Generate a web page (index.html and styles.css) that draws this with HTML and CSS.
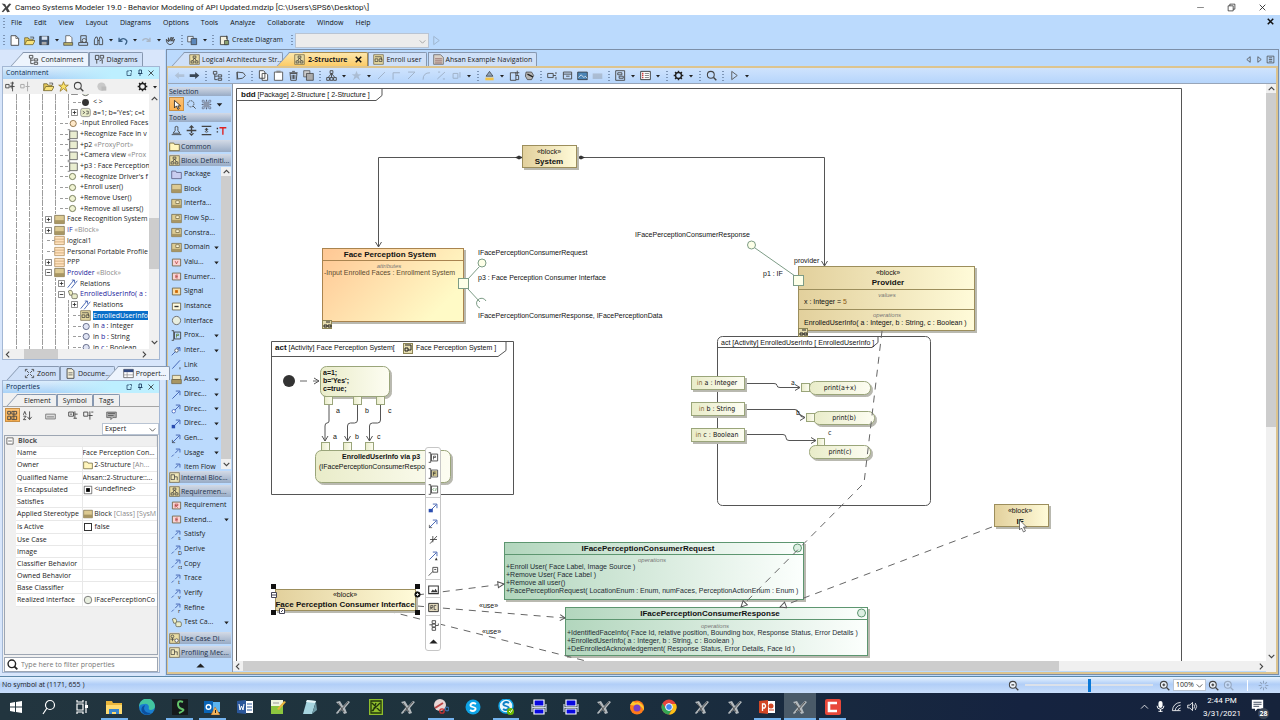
FILE: index.html
```html
<!DOCTYPE html>
<html lang="en">
<head>
    <meta charset="utf-8">
    <title>Cameo Systems Modeler 19.0</title>
    <link rel="stylesheet" href="styles.css">
</head>
<body>

<header class="titlebar">
    <i data-icon="cameoDark"></i>
    <span class="title">Cameo Systems Modeler 19.0 - Behavior Modeling of API Updated.mdzip [C:\Users\SPS6\Desktop\]</span>
    <button class="win" aria-label="Minimize"><i data-icon="min"></i></button>
    <button class="win" aria-label="Restore"><i data-icon="restore"></i></button>
    <button class="win" aria-label="Close"><i data-icon="close"></i></button>
</header>

<nav class="menubar">
    <span class="grip"></span>
    <button>File</button>
    <button>Edit</button>
    <button>View</button>
    <button>Layout</button>
    <button>Diagrams</button>
    <button>Options</button>
    <button>Tools</button>
    <button>Analyze</button>
    <button>Collaborate</button>
    <button>Window</button>
    <button>Help</button>
    <button class="closedoc" aria-label="Close document"><i data-icon="closeBold"></i></button>
</nav>

<div class="toolbar main-tools">
    <span class="tools" data-tools="| newDoc open save v print preview find v undo v redo v clean | copyDiag v |"></span>
    <button class="create"><i data-icon="create"></i>Create Diagram</button>
    <span class="grip"></span>
    <span class="drop quick"><select aria-label="Quick run" disabled><option></option></select><i data-icon="chev"></i></span>
    <button class="tool off" aria-label="Run"><i data-icon="play"></i></button>
</div>

<main>
    <aside>
        <div class="tabs">
            <button class="tab slant on"><i data-icon="tree"></i>Containment</button>
            <button class="tab"><i data-icon="diagrams"></i>Diagrams</button>
        </div>
        <section class="panel containment">
            <h2>Containment<span class="panel-btns"><i data-icon="float"></i><i data-icon="pin"></i><i data-icon="close"></i></span></h2>
            <div class="toolbar grey">
                <span class="tools" data-tools="expand collapse _ open star search _ refresh"></span>
                <span class="tools push" data-tools="gear v"></span>
            </div>
            <div class="tree-wrap">
                <ul class="tree" id="tree"></ul>
                <div class="vscroll tree-scroll"><i data-icon="up"></i><span class="thumb"></span><i data-icon="down"></i></div>
            </div>
            <div class="hscroll tree-h"><i data-icon="left"></i><span class="thumb"></span><i data-icon="right"></i></div>
        </section>

        <div class="tabs bottom-tabs">
            <button class="tab slant"><i data-icon="zoomTab"></i>Zoom</button>
            <button class="tab"><i data-icon="doc"></i>Docume...</button>
            <button class="tab slant on"><i data-icon="props"></i>Propert...</button>
        </div>
        <section class="panel properties">
            <h2>Properties<span class="panel-btns"><i data-icon="float"></i><i data-icon="pin"></i><i data-icon="close"></i></span></h2>
            <div class="tabs sub-tabs">
                <button class="tab slant on">Element</button>
                <button class="tab">Symbol</button>
                <button class="tab">Tags</button>
            </div>
            <div class="toolbar grey prop-tools">
                <span class="tools" data-tools="*categ sort _ desc _ expand2 collapse2 _ note"></span>
            </div>
            <div class="mode">
                <span class="drop"><select aria-label="Mode"><option>Expert</option></select><i data-icon="chev"></i></span>
            </div>
            <div class="grid">
                <table>
                    <colgroup><col class="gutter"><col class="names"><col></colgroup>
                    <tbody>
                        <tr class="group"><td><i data-icon="minusBox"></i></td><th colspan="2">Block</th></tr>
                        <tr><td></td><th>Name</th><td>Face Perception Con...</td></tr>
                        <tr class="tall"><td></td><th>Owner</th><td><i data-icon="folder"></i> 2-Structure <em>[Ah...</em></td></tr>
                        <tr><td></td><th>Qualified Name</th><td>Ahsan::2-Structure::...</td></tr>
                        <tr><td></td><th>Is Encapsulated</th><td><i data-icon="undef"></i> &lt;undefined&gt;</td></tr>
                        <tr><td></td><th>Satisfies</th><td></td></tr>
                        <tr class="tall"><td></td><th>Applied Stereotype</th><td><i data-icon="block"></i> Block <em>[Class] [SysM</em></td></tr>
                        <tr class="tall"><td></td><th>Is Active</th><td><label><input type="checkbox">false</label></td></tr>
                        <tr><td></td><th>Use Case</th><td></td></tr>
                        <tr><td></td><th>Image</th><td></td></tr>
                        <tr><td></td><th>Classifier Behavior</th><td></td></tr>
                        <tr><td></td><th>Owned Behavior</th><td></td></tr>
                        <tr><td></td><th>Base Classifier</th><td></td></tr>
                        <tr class="tall"><td></td><th>Realized Interface</th><td><i data-icon="iface"></i> IFacePerceptionCo</td></tr>
                    </tbody>
                </table>
            </div>
            <label class="filter"><i data-icon="searchBig"></i><input type="text" placeholder="Type here to filter properties"></label>
        </section>
    </aside>

    <section class="editor">
        <div class="tabs editor-tabs">
            <button class="tab slant first"><i data-icon="bdd"></i>Logical Architecture Str...</button>
            <button class="tab slant on"><i data-icon="bdd"></i>2-Structure<i data-icon="closeBold"></i></button>
            <button class="tab"><i data-icon="act"></i>Enroll user</button>
            <button class="tab"><i data-icon="nav"></i>Ahsan Example Navigation</button>
            <span class="tab-nav"><i data-icon="triL"></i><i data-icon="triR"></i><i data-icon="list"></i></span>
        </div>
        <div class="frame">
            <div class="toolbar">
                <span class="tools" data-tools="-back fwd | tree | goto | copy paste trash dup | layout v -route v -l1 -l2 -l3 -l4 -l5 -l6 v | fill v addDiag refreshD | port comp image -dim | align v listC v | gear v | search | play v"></span>
            </div>
            <div class="work">
                <div class="palette">
                    <h3>Selection</h3>
                    <div class="picks"><button class="tool hot" aria-label="Select"><i data-icon="cursor"></i></button><button class="tool" aria-label="Find in diagram"><i data-icon="lasso"></i></button><button class="tool" aria-label="Marquee"><i data-icon="marquee"></i></button><i data-icon="caret"></i></div>
                    <h3>Tools</h3>
                    <div class="picks"><button class="tool" aria-label="Stamp"><i data-icon="stamp"></i></button><button class="tool" aria-label="Spread"><i data-icon="spread"></i></button><button class="tool" aria-label="Gather"><i data-icon="gather"></i></button><button class="tool" aria-label="Text"><i data-icon="textT"></i></button></div>
                    <h3 class="drawer"><i data-icon="folder"></i>Common</h3>
                    <h3 class="drawer"><i data-icon="bdd"></i>Block Definiti...</h3>
                    <div class="pal-scroll">
                        <ul class="pal" id="palBlock"></ul>
                        <div class="vscroll"><i data-icon="up"></i><span class="thumb"></span><i data-icon="down"></i></div>
                    </div>
                    <h3 class="drawer"><i data-icon="ibd"></i>Internal Bloc...</h3>
                    <h3 class="drawer"><i data-icon="bdd"></i>Requiremen...</h3>
                    <ul class="pal" id="palReq"></ul>
                    <h3 class="drawer"><i data-icon="usecase"></i>Use Case Di...</h3>
                    <h3 class="drawer"><i data-icon="ibd"></i>Profiling Mec...</h3>
                    <button class="more" aria-label="More"><i data-icon="triUp"></i></button>
                </div>

                <div class="canvas-col">
                    <div class="canvas">
                        <svg class="diagram" width="1031" height="577" viewBox="233 84 1031 577">
                            <defs>
                                <linearGradient id="gSand"><stop offset="0" stop-color="#e2d09c"/><stop offset="1" stop-color="#fffbd9"/></linearGradient>
                                <linearGradient id="gPeach" x2="1" y2=".5"><stop offset="0" stop-color="#ffc794"/><stop offset="1" stop-color="#fffac6"/></linearGradient>
                                <linearGradient id="gMint"><stop offset="0" stop-color="#b2d6bd"/><stop offset="1" stop-color="#fcfffd"/></linearGradient>
                                <linearGradient id="gLeaf"><stop offset="0" stop-color="#e9ecc9"/><stop offset="1" stop-color="#fdfdf2"/></linearGradient>
                                <marker id="arrow" viewBox="0 0 8 8" refX="7" refY="4" markerWidth="8" markerHeight="8" markerUnits="userSpaceOnUse" orient="auto"><path d="M2 1l5 3-5 3" class="line"/></marker>
                                <marker id="real" viewBox="0 0 8 8" refX="7" refY="4" markerWidth="8" markerHeight="8" markerUnits="userSpaceOnUse" orient="auto"><path d="M1 1l6 3-6 3z" class="line white"/></marker>
                                <filter id="drop" x="-10%" y="-10%" width="120%" height="130%"><feDropShadow dx="2" dy="2" stdDeviation="0" flood-color="#b9b9b0"/></filter>
                            </defs>

                            <!-- diagram frame -->
                            <path class="line" d="M236.500 662V88.500H1181.500V662M236.500 100.500H376l6-5v-7"/>
                            <text x="241" y="97"><tspan class="b">bdd</tspan> [Package] 2-Structure [ 2-Structure ]</text>

                            <!-- composition lines -->
                            <path class="line" d="M522 157.500H378.500V247" marker-end="url(#arrow)"/>
                            <path class="line" d="M577 157.500H824.500V266" marker-end="url(#arrow)"/>
                            <path d="M515 157.500l4-2 4 2-4 2zM577 157.500l4-2 4 2-4 2z" fill="#333"/>

                            <g class="sand">
                                <rect x="522.500" y="145.500" width="54" height="22"/>
                                <text class="c" x="549" y="154">«block»</text>
                                <text class="c b" x="549" y="164">System</text>
                            </g>

                            <!-- Face Perception System -->
                            <rect class="peach" x="322.500" y="248.500" width="141" height="73"/>
                            <path d="M323 260.500h140" stroke="#a98450"/>
                            <text class="c b" x="390" y="257">Face Perception System</text>
                            <text class="c it" x="389" y="268">attributes</text>
                            <text x="324" y="275" class="dim">-Input Enrolled Faces : Enrollment System</text>
                            <g class="badge"><rect x="322.500" y="320.500" width="9" height="8"/><path d="M324 327v-2h3v2zM326 322h4M328 325h3v2h-3z"/></g>
                            <path class="green" d="M468 279l11-12M468 289l12 13M486 301a5 5 0 1 0-6 7"/>
                            <circle class="green pale" cx="482" cy="263" r="4"/>
                            <rect class="green pale" x="458.500" y="278.500" width="10" height="10"/>
                            <text x="478" y="255">IFacePerceptionConsumerRequest</text>
                            <text x="478" y="280">p3 : Face Perception Consumer Interface</text>
                            <text x="478" y="318">IFacePerceptionConsumerResponse, IFacePerceptionData</text>

                            <!-- Provider -->
                            <text x="635" y="237">IFacePerceptionConsumerResponse</text>
                            <text x="794" y="263">provider</text>
                            <text x="763" y="276">p1 : IF</text>
                            <g class="sand">
                                <rect x="798.500" y="266.500" width="176" height="64"/>
                                <path d="M799 289.500h175M799 309.500h175" stroke="#9c8e5c"/>
                                <text class="c" x="888" y="275">«block»</text>
                                <text class="c b" x="888" y="285">Provider</text>
                                <text class="c it" x="887" y="297">values</text>
                                <text x="804" y="304">x : Integer = <tspan fill="#8a5a10">5</tspan></text>
                                <text class="c it" x="887" y="317">operations</text>
                                <text x="804" y="325">EnrolledUserInfo( a : Integer, b : String, c : Boolean )</text>
                            </g>
                            <path class="green" d="M755 248l40 28"/>
                            <circle class="green pale" cx="751.500" cy="245" r="4"/>
                            <rect class="green pale" x="793.500" y="275.500" width="10" height="10"/>

                            <!-- activity: Face Perception System -->
                            <path class="line" d="M271.500 341.500h242v153h-242zM271.500 356.500H498l8-6v-9"/>
                            <text x="275" y="350"><tspan class="b">act</tspan> [Activity] Face Perception System[</text>
                            <g class="badge"><rect x="403.500" y="343.500" width="9" height="10"/><path d="M405 348h3v3h-3zM405 345h6v5h-3"/></g>
                            <text x="416" y="350">Face Perception System ]</text>
                            <circle cx="289" cy="381" r="6" fill="#333"/>
                            <path class="line dash" d="M300 381h19" marker-end="url(#arrow)"/>
                            <g class="leaf">
                                <rect x="320.500" y="366.500" width="69" height="30" rx="6" filter="url(#drop)"/>
                                <rect x="324.500" y="396.500" width="8" height="8"/><rect x="353.500" y="396.500" width="8" height="8"/><rect x="376.500" y="396.500" width="8" height="8"/>
                                <rect x="315.500" y="450.500" width="135" height="32" rx="6" filter="url(#drop)"/>
                                <rect x="321.500" y="442.500" width="8" height="8"/><rect x="343.500" y="442.500" width="8" height="8"/><rect x="365.500" y="442.500" width="8" height="8"/>
                            </g>
                            <text class="b s" x="323" y="375">a=1;</text>
                            <text class="b s" x="323" y="383">b='Yes';</text>
                            <text class="b s" x="323" y="391">c=true;</text>
                            <path class="line" d="M329 405v16q0 2-2 2t-2 3v15" marker-end="url(#arrow)"/>
                            <path class="line" d="M357.500 405v15q0 3-3 3h-4q-3 0-3 3v15" marker-end="url(#arrow)"/>
                            <path class="line" d="M380.500 405v15q0 3-3 3h-5q-3 0-3 3v15" marker-end="url(#arrow)"/>
                            <text x="336" y="413">a</text><text x="365" y="413">b</text><text x="388" y="413">c</text>
                            <text x="333" y="439">a</text><text x="355" y="439">b</text><text x="377" y="439">c</text>
                            <text class="b s" x="342" y="459">EnrolledUserInfo via p3</text>
                            <text x="319" y="469">(IFacePerceptionConsumerResponse)</text>

                            <!-- activity: EnrolledUserInfo -->
                            <rect class="line" x="717.500" y="336.500" width="213" height="169" rx="5"/>
                            <path class="line" d="M718 347.500H872l6-5v-6"/>
                            <text x="721" y="345">act [Activity] EnrolledUserInfo [ EnrolledUserInfo ]</text>
                            <g class="badge"><rect x="798.500" y="328.500" width="9" height="8"/><path d="M800 335v-2h3v2zM802 330h4M804 333h3v2h-3z"/></g>
                            <path class="line" d="M745 383.500h29q3 0 3 2t3 2h20" marker-end="url(#arrow)"/>
                            <path class="line" d="M745 409.500h50q3 0 4 4t6 4" marker-end="url(#arrow)"/>
                            <path class="line" d="M745 434.500h38q3 0 3 3t3 3h27" marker-end="url(#arrow)"/>
                            <g class="leaf">
                                <rect x="691.500" y="376.500" width="53" height="13" filter="url(#drop)"/>
                                <rect x="691.500" y="402.500" width="53" height="13" filter="url(#drop)"/>
                                <rect x="691.500" y="428.500" width="53" height="13" filter="url(#drop)"/>
                                <rect x="809.500" y="381.500" width="61" height="13" rx="6" filter="url(#drop)"/>
                                <rect x="813.500" y="411.500" width="61" height="13" rx="6" filter="url(#drop)"/>
                                <rect x="809.500" y="445.500" width="61" height="13" rx="6" filter="url(#drop)"/>
                                <rect x="801.500" y="383.500" width="8" height="8"/><rect x="806.500" y="413.500" width="8" height="8"/><rect x="817.500" y="438.500" width="7" height="7"/>
                            </g>
                            <g class="w">
                                <text class="c" x="717" y="385"><tspan fill="#8a6a30">in</tspan> a : Integer</text>
                                <text class="c" x="717" y="411"><tspan fill="#8a6a30">in</tspan> b : String</text>
                                <text class="c" x="717" y="437"><tspan fill="#8a6a30">in</tspan> c : Boolean</text>
                                <text class="c" x="840" y="390">print(a+x)</text>
                                <text class="c" x="844" y="420">print(b)</text>
                                <text class="c" x="840" y="454">print(c)</text>
                                <text x="791" y="385">a</text><text x="796" y="415">b</text><text x="828" y="435">c</text>
                            </g>

                            <!-- interfaces -->
                            <g class="mint">
                                <rect x="504.500" y="542.500" width="299" height="57"/>
                                <path d="M505 554.500h298"/>
                                <circle cx="797.500" cy="548" r="4"/>
                            </g>
                            <text class="c b" x="648" y="551">IFacePerceptionConsumerRequest</text>
                            <text class="c it" x="652" y="562">operations</text>
                            <g class="ops">
                                <text x="506" y="569">+Enroll User( Face Label, Image Source )</text>
                                <text x="506" y="577">+Remove User( Face Label )</text>
                                <text x="506" y="585">+Remove all user()</text>
                                <text x="506" y="593">+FacePerceptionRequest( LocationEnum : Enum, numFaces, PerceptionActionEnum : Enum )</text>
                            </g>
                            <g class="mint">
                                <rect x="565.500" y="607.500" width="302" height="48"/>
                                <path d="M566 619.500h301"/>
                                <circle cx="861.500" cy="613" r="4"/>
                            </g>
                            <text class="c b" x="710" y="616">IFacePerceptionConsumerResponse</text>
                            <text class="c it" x="715" y="628">operations</text>
                            <g class="ops">
                                <text x="567" y="635">+IdentifiedFaceInfo( Face Id, relative position, Bounding box, Response Status, Error Details )</text>
                                <text x="567" y="643">+EnrolledUserInfo( a : Integer, b : String, c : Boolean )</text>
                                <text x="567" y="651">+DeEnrolledAcknowledgement( Response Status, Error Details, Face Id )</text>
                            </g>

                            <path class="line dash" d="M882 331L864 483 741 607" marker-end="url(#real)"/>
                            <path class="line dash" d="M992 527L780 607" marker-end="url(#real)"/>
                            <path class="line dash" d="M417 595l87-11" marker-end="url(#real)"/>
                            <path class="line dash" d="M417 606l148 12" marker-end="url(#arrow)"/>
                            <path class="line dash" d="M388 611L590 662"/>
                            <text x="479" y="608">«use»</text>
                            <text x="482" y="634">«use»</text>

                            <!-- IF block with the pointer over it -->
                            <g class="sand">
                                <rect x="994.500" y="504.500" width="54" height="22"/>
                                <text class="c" x="1020" y="513">«block»</text>
                                <text class="c b" x="1020" y="524">IF</text>
                            </g>
                            <path d="M1019.500 520v10l2-2 2 4 2-1-2-4h3z" fill="#fff" stroke="#444" stroke-width=".7"/>

                            <!-- selected block -->
                            <g class="sand">
                                <rect x="275.500" y="589.500" width="140" height="21"/>
                                <text class="c" x="345" y="597">«block»</text>
                                <text class="c b" x="345" y="607">Face Perception Consumer Interface</text>
                            </g>
                            <path d="M271 584h5v5h-5zM415 584h5v5h-5zM271 610h5v5h-5zM415 610h5v5h-5z"/>
                            <path d="M271.500 592.500h5v5h-5zM279.500 608.500h5v5h-5zM272 595h4M281 612l2-2" fill="#fff" stroke="#445"/>
                            <circle cx="417.500" cy="594.500" r="3"/><path d="M416 594.500h3M417.500 593v3" stroke="#fff" stroke-width=".8"/>
                        </svg>
                        <div class="smart">
                            <span class="tools" data-tools="portP portF portX = assocB gen cross dirA anchor = imgBox = rcBox = hier triUp"></span>
                        </div>
                    </div>
                    <div class="hscroll canvas-h"><i data-icon="left"></i><span class="thumb"></span><i data-icon="right"></i></div>
                </div>
                <div class="vscroll canvas-v"><i data-icon="up"></i><span class="thumb"></span><i data-icon="down"></i></div>
            </div>
        </div>
    </section>
</main>

<footer class="statusbar">
    <span class="msg">No symbol at (1171, 655 )</span>
    <button class="tool" aria-label="Zoom out"><i data-icon="zoomOut"></i></button>
    <input type="range" aria-label="Zoom" min="0" max="100" value="50">
    <button class="tool" aria-label="Zoom in"><i data-icon="zoomIn"></i></button>
    <span class="drop"><select aria-label="Zoom level"><option>100%</option></select><i data-icon="chev"></i></span>
    <button class="tool" aria-label="Fit"><i data-icon="zoomIn"></i></button>
    <button class="tool off" aria-label="Fit selection"><i data-icon="zoomIn"></i></button>
    <span class="busy"><i data-icon="busy"></i></span>
</footer>

<div class="taskbar">
    <div class="apps" id="apps"></div>
    <div class="tray">
        <i data-icon="trayUp"></i><i data-icon="mic"></i><i data-icon="wifi"></i><i data-icon="sound"></i>
        <div class="clock"><span>2:44 PM</span><span>3/31/2021</span></div>
        <div class="notif"><i data-icon="notif"></i><b>28</b></div>
    </div>
</div>

<script src="script.js"></script>
</body>
</html>
```
FILE: styles.css
```css
* {
    box-sizing: border-box;
}
body {
    margin: 0;
    height: 100vh;
    display: flex;
    flex-direction: column;
    overflow: hidden;
    background: #bbdafd;
    color: #1c1c1c;
    font: 7px/10px "Open Sans", "Noto Sans", sans-serif;
}
button, input, select {
    font: inherit;
    color: inherit;
    margin: 0;
    padding: 0;
    border: 0;
    background: none;
}
h2, h3, ul {
    margin: 0;
    padding: 0;
    font: inherit;
    list-style: none;
}
i {
    display: inline-flex;
    flex: none;
    font-style: normal;
}
i svg {
    width: 11px;
    height: 11px;
    display: block;
}

/* title and menu */
.titlebar {
    display: flex;
    flex: none;
    align-items: center;
    height: 15px;
    padding: 0 2px 0 1px;
    background: #fff;
}
.title {
    flex: 1;
    margin-left: 3px;
    font-family: Roboto, "Open Sans", sans-serif;
    font-size: 8px;
}
.win {
    width: 31px;
    display: flex;
    justify-content: center;
}
.win svg {
    width: 9px;
    height: 9px;
}
.menubar {
    display: flex;
    flex: none;
    align-items: center;
    height: 16px;
    padding-right: 4px;
    gap: 12px;
    color: #111;
}
.menubar .grip {
    margin-right: -6px;
}
.closedoc {
    margin-left: auto;
}
.grip {
    width: 2px;
    height: 10px;
    margin: 0 2px 0 3px;
    background: repeating-linear-gradient(#7d95b5 0 1px, transparent 1px 3px);
    flex: none;
}

/* toolbars */
.toolbar {
    display: flex;
    flex: none;
    align-items: center;
    height: 15px;
    background: linear-gradient(#cfe3fd, #b6d5fb);
}
.main-tools {
    height: 18px;
    background: none;
}
.tools {
    display: flex;
    align-items: center;
}
.tool {
    width: 15px;
    height: 14px;
    display: flex;
    align-items: center;
    justify-content: center;
}
.off {
    opacity: .3;
}
.hot {
    background: linear-gradient(#fbc37a, #fdb04c);
    outline: 1px solid #c98f45;
    outline-offset: -1px;
}
.caret {
    width: 9px;
    display: flex;
    justify-content: center;
}
.caret svg {
    width: 8px;
}
.gap {
    width: 8px;
}
.create {
    display: flex;
    align-items: center;
    gap: 2px;
    padding: 0 5px 0 3px;
}
.drop {
    position: relative;
    display: flex;
    background: #fff;
    border: 1px solid #b9c4d3;
}
.drop select {
    appearance: none;
    width: 100%;
    padding: 0 2px;
}
.drop i {
    position: absolute;
    right: 1px;
    top: 1px;
    pointer-events: none;
}
.drop svg {
    width: 9px;
    height: 9px;
}
.quick {
    width: 134px;
    height: 15px;
    background: #ececec;
}
.quick i {
    top: 3px;
    opacity: .5;
}
.grey {
    background: #f0f0f0;
}
.push {
    margin-left: auto;
}

/* tabs */
.tabs {
    display: flex;
    flex: none;
    align-items: flex-end;
    padding-top: 2px;
}
.tab {
    position: relative;
    isolation: isolate;
    height: 14px;
    padding: 0 4px;
    display: flex;
    align-items: center;
    gap: 2px;
    background: #cfe0f8;
    border: 1px solid #8798b0;
    border-bottom: 0;
    border-radius: 0 2px 0 0;
    white-space: nowrap;
}
.tab.slant {
    border-left: 0;
}
.tab.slant::before {
    content: "";
    position: absolute;
    left: -7px;
    top: -1px;
    bottom: 0;
    width: 13px;
    transform: skewX(-42deg);
    background: inherit;
    border: solid #8798b0;
    border-width: 1px 0 0 1px;
    z-index: -1;
}
.tab.on {
    background: #edf4fd;
    z-index: 1;
}

main {
    flex: 1;
    display: flex;
    min-height: 0;
}

/* left side */
aside {
    width: 165px;
    flex: none;
    display: flex;
    flex-direction: column;
    padding: 0 5px 3px 2px;
    background: #d8e6fb;
    border-top: 1px solid #c6daf5;
}
aside > .tabs {
    padding-left: 22px;
}
.bottom-tabs {
    margin-top: 4px;
}
aside > .bottom-tabs {
    padding-left: 18px;
}
.bottom-tabs .tab {
    padding-right: 3px;
}
.bottom-tabs .on {
    margin-left: 4px;
}
.panel {
    display: flex;
    flex-direction: column;
    border: 1px solid #a3b7d4;
    background: #f0f0f0;
}
.containment {
    flex: none;
}
.panel h2 {
    display: flex;
    flex: none;
    align-items: center;
    height: 12px;
    padding: 0 4px 0 3px;
    color: #0d2c50;
    background: linear-gradient(90deg, transparent 30%, #bdefff 70%), linear-gradient(#dcedfc, #a9d2f7);
}
.panel-btns {
    margin-left: auto;
    display: flex;
    gap: 3px;
}
.panel-btns svg {
    width: 8px;
    height: 8px;
}
.tree-wrap {
    height: 255px;
    display: flex;
    overflow: hidden;
    background: #fff;
}
.tree {
    flex: 1;
    min-width: 0;
    height: 267px;
    margin-top: -8px;
    padding-left: 1px;
    display: grid;
    grid-auto-rows: 1fr;
    overflow: hidden;
}
.tree li {
    display: flex;
    align-items: center;
    gap: 2px;
    min-height: 0;
    white-space: nowrap;
}
.tree .lvl {
    align-self: stretch;
    width: 13px;
    margin-right: -2px;
    flex: none;
    border-right: 1px dashed #9d9d9d;
}
.tree .pm {
    width: 13px;
    margin-right: -4px;
    flex: none;
    position: relative;
}
.tree .pm svg {
    width: 7px;
    height: 7px;
    margin-left: 2px;
}
.tree .pm.leaf::before {
    content: "";
    width: 8px;
    margin: 3px 0 3px 4px;
    border-top: 1px dashed #9d9d9d;
}
.tree em, .grid em {
    font-style: normal;
    color: #8a8a8a;
}
.tree b {
    font-weight: normal;
    color: #1d1d9c;
}
.tree .sel {
    align-self: stretch;
    background: #0a6fc9;
    color: #fff;
}

/* scrollbars */
.vscroll {
    width: 10px;
    flex: none;
    display: flex;
    flex-direction: column;
    align-items: center;
    justify-content: space-between;
    background: #f0f0f0;
}
.vscroll svg, .hscroll svg {
    width: 9px;
    height: 9px;
}
.vscroll .thumb {
    width: 100%;
    background: #cdcdcd;
}
.hscroll {
    height: 10px;
    flex: none;
    display: flex;
    align-items: center;
    background: #f0f0f0;
}
.hscroll .thumb {
    height: 100%;
    background: #cdcdcd;
}
.hscroll i:last-child {
    margin-left: auto;
}
.tree-scroll .thumb {
    height: 51px;
    margin-top: 115px;
    margin-bottom: auto;
}
.tree-scroll .thumb + i {
    margin-bottom: 2px;
}
.tree-h {
    padding-right: 10px;
}
.tree-h .thumb {
    width: 34px;
    margin-left: 12px;
}

/* properties */
.properties {
    flex: 1;
    min-height: 0;
}
.sub-tabs {
    padding: 1px 0 0 16px;
    border-bottom: 1px solid #a5a5a5;
}
.sub-tabs .tab {
    height: 12px;
    padding: 0 5px;
    background: #f0f0f0;
}
.prop-tools {
    height: 16px;
    padding-left: 2px;
}
.mode {
    display: flex;
    flex: none;
    justify-content: flex-end;
}
.mode .drop {
    width: 57px;
    height: 12px;
}
.grid {
    flex: 1;
    min-height: 0;
    margin: 0 1px 2px;
    border: 1px solid #9da6b3;
    overflow: hidden;
}
.grid table {
    width: 100%;
    table-layout: fixed;
    border-collapse: collapse;
}
.gutter {
    width: 11px;
}
.names {
    width: 66px;
}
.grid td, .grid th {
    height: 12px;
    padding: 0;
    font-weight: normal;
    text-align: left;
    white-space: nowrap;
    overflow: hidden;
    background: #fff;
    border-bottom: 1px solid #e8e8e8;
    line-height: 10px;
}
.grid .tall td {
    height: 13px;
}
.grid td:first-child {
    background: #f0f0f0;
    border: 0;
}
.grid th {
    border-right: 1px solid #e8e8e8;
}
.grid tr:not(.group) th {
    padding-left: 1px;
}
.grid .group th, .grid .group td {
    height: 10px;
    background: #f0f0f0;
}
.grid .group th {
    padding-left: 2px;
    font-weight: bold;
    color: #555;
}
.grid i {
    vertical-align: middle;
}
.grid td i svg {
    width: 10px;
    height: 10px;
}
.grid label {
    display: flex;
    align-items: center;
    gap: 3px;
    padding-left: 1px;
}
.grid input {
    appearance: none;
    width: 8px;
    height: 8px;
    border: 1px solid #333;
    background: #fff;
}
.filter {
    display: flex;
    flex: none;
    align-items: center;
    height: 15px;
    margin: 0 1px;
    padding: 0 2px;
    gap: 3px;
    background: #fff;
    border: 1px solid #9da6b3;
}
.filter input {
    flex: 1;
    min-width: 0;
    outline: 0;
}
.filter input::placeholder {
    color: #777;
}

/* editor */
.editor {
    flex: 1;
    min-width: 0;
    display: flex;
    flex-direction: column;
    margin: 0 1px 1px;
    border: 1px solid #7c8fa8;
}
.editor-tabs {
    padding-left: 18px;
}
.editor-tabs .first {
    width: 98px;
}
.editor-tabs .on {
    margin-left: 7px;
    padding-right: 3px;
    gap: 3px;
    background: linear-gradient(#fde7ac, #fbcb66);
    font-weight: bold;
    border-color: #a78a4c;
}
.editor-tabs .on i:last-child {
    margin-left: 3px;
}
.editor-tabs .tab:nth-child(4) {
    margin-left: 1px;
}
.tab-nav {
    margin: 0 3px 2px auto;
    display: flex;
    gap: 2px;
}
.tab-nav svg {
    width: 9px;
    height: 9px;
}
.frame {
    flex: 1;
    min-height: 0;
    display: flex;
    flex-direction: column;
    border: 2px solid #dcc48f;
    border-left-width: 1px;
}
.frame > .toolbar {
    height: 16px;
    padding-left: 4px;
    border-bottom: 1px solid #98a5b8;
}
.frame .toolbar .grip {
    margin: 0 3px;
}
.frame .toolbar .caret {
    width: 10px;
}
.work {
    flex: 1;
    min-height: 0;
    display: flex;
}

/* palette */
.palette {
    width: 65px;
    flex: none;
    display: flex;
    flex-direction: column;
    gap: 1px;
    padding: 3px 1px 0 1px;
    background: #bbdafd;
    border-right: 1px solid #8c98a8;
}
.palette > * {
    flex: none;
}
.palette h3 {
    height: 9px;
    line-height: 9px;
    color: #20304a;
    background: linear-gradient(#d3dae6, #98abc5);
    white-space: nowrap;
}
.palette .drawer {
    height: 12px;
    margin-top: 1px;
    display: flex;
    align-items: center;
    gap: 1px;
}
.picks {
    display: flex;
    align-items: center;
    height: 14px;
}
.palette .picks + h3 {
    margin-top: 1px;
}
.palette .picks + .drawer {
    margin-top: 2px;
}
.pal-scroll {
    height: 302px;
    display: flex;
    overflow: hidden;
}
.pal-scroll .thumb {
    flex: 1;
    margin-bottom: 1px;
}
.pal {
    flex: 1;
    display: grid;
    grid-auto-rows: 1fr;
}
#palBlock {
    height: 308px;
}
#palReq {
    flex: none;
    height: 132px;
}
.pal button {
    width: 100%;
    height: 14px;
    display: flex;
    align-items: center;
    gap: 2px;
    padding-left: 2px;
    text-align: left;
    white-space: nowrap;
}
.pal button i:nth-child(2) {
    margin-left: auto;
}
.pal button i:nth-child(2) svg {
    width: 9px;
}
.palette .more {
    flex: 1;
    display: flex;
    align-items: center;
    justify-content: center;
}

/* canvas */
.canvas-col {
    flex: 1;
    min-width: 0;
    display: flex;
    flex-direction: column;
}
.canvas {
    flex: 1;
    min-height: 0;
    position: relative;
    overflow: hidden;
    background: #fff;
}
.diagram {
    position: absolute;
    left: 0;
    top: 0;
    font: 7px "Liberation Sans", Arial, sans-serif;
    fill: #111;
}
.diagram .line {
    fill: none;
    stroke: #555;
    stroke-width: 1;
}
.diagram .white {
    fill: #fff;
}
.diagram .dash {
    stroke-dasharray: 7 6;
    stroke: #666;
}
.diagram .b {
    font-weight: bold;
    font-size: 8px;
}
.diagram .b.s {
    font-size: 7px;
}
.diagram .c {
    text-anchor: middle;
}
.diagram .it {
    font-style: italic;
    font-size: 6px;
    fill: #777;
}
.diagram .dim {
    fill: #5b4a30;
}
.diagram .w {
    font-family: "DejaVu Sans Condensed", "DejaVu Sans", sans-serif;
}
.sand rect {
    fill: url(#gSand);
    stroke: #9c8e5c;
    filter: url(#drop);
}
.peach {
    fill: url(#gPeach);
    stroke: #a98450;
    filter: url(#drop);
}
.mint rect {
    fill: url(#gMint);
    stroke: #5d9670;
    filter: url(#drop);
}
.mint path, .mint circle {
    fill: #dcefe2;
    stroke: #5d9670;
}
.leaf rect {
    fill: url(#gLeaf);
    stroke: #9aa57a;
}
.green {
    fill: none;
    stroke: #7d9c86;
}
.pale {
    fill: #fdffe8;
}
.badge rect {
    fill: #e5dcae;
    stroke: #8c8455;
}
.badge path {
    fill: none;
    stroke: #222;
}
.ops {
    fill: #1e2b33;
}
.smart {
    position: absolute;
    left: 192px;
    top: 363px;
    padding: 1px 0;
    background: #fff;
    border: 1px solid #c6c6c6;
    border-radius: 3px;
}
.smart .tools {
    flex-direction: column;
}
.smart .tool {
    width: 14px;
    height: 16px;
}
.smart hr {
    width: 100%;
    margin: 0 0 1px;
    border: 0;
    border-top: 1px solid #ccc;
}
.canvas-h {
    margin-bottom: 1px;
}
.canvas-h .thumb {
    width: 79%;
    margin-left: 1px;
}
.canvas-v .thumb {
    height: 334px;
    margin-bottom: auto;
}
.canvas-v {
    padding-bottom: 11px;
}

/* status bar */
.statusbar {
    display: flex;
    flex: none;
    align-items: center;
    height: 17px;
    padding: 0 11px 0 2px;
    border-top: 1px solid #5c87a8;
    background: linear-gradient(#e6f3ff, #b1cef7 45%, #c9defb);
}
.msg {
    flex: 1;
}
.statusbar input {
    appearance: none;
    width: 128px;
    height: 14px;
    margin: 0 4px;
    background: linear-gradient(#dbe1ea, #dbe1ea) center / 100% 2px no-repeat;
}
.statusbar input::-webkit-slider-thumb {
    appearance: none;
    width: 3px;
    height: 13px;
    background: #0a78d6;
}
.statusbar .drop {
    width: 33px;
    height: 12px;
    margin-left: 1px;
}
.busy {
    display: flex;
    margin-left: 11px;
    padding-left: 10px;
    border-left: 1px solid #fff;
}

/* windows taskbar */
.taskbar {
    display: flex;
    flex: none;
    align-items: center;
    justify-content: space-between;
    height: 27px;
    background: linear-gradient(90deg, #22353f, #1d323d 40%, #152340 80%, #16233b);
    color: #fff;
}
.apps {
    width: 849px;
    height: 100%;
    display: grid;
    grid-auto-flow: column;
    grid-auto-columns: 1fr;
}
.apps button {
    display: flex;
    align-items: center;
    justify-content: center;
    margin: 0 3px;
    border: solid transparent;
    border-width: 2px 0;
}
.apps .run {
    border-bottom-color: #74b3ee;
}
.apps .front {
    margin: 0;
    background: #4a5a68;
}
.apps svg {
    width: 16px;
    height: 16px;
}
.tray {
    display: flex;
    align-items: center;
    gap: 5px;
    padding-right: 10px;
}
.clock {
    display: flex;
    flex-direction: column;
    align-items: center;
    width: 38px;
    line-height: 13px;
    font-family: Roboto, "Open Sans", sans-serif;
    font-size: 8px;
    white-space: nowrap;
}
.notif {
    position: relative;
    margin-left: 5px;
    width: 19px;
}
.notif svg {
    width: 13px;
    height: 13px;
}
.notif b {
    position: absolute;
    right: 1px;
    bottom: -4px;
    width: 11px;
    height: 11px;
    line-height: 11px;
    border-radius: 6px;
    background: #3c4656;
    text-align: center;
}
```
FILE: script.js
```js
// 16x16 glyphs
const dk = 'fill="none" stroke="#444" stroke-width="1.3"';
const wh = 'fill="none" stroke="#fff" stroke-width="1.2"';
const bl = 'fill="none" stroke="#3c5cae" stroke-width="1.3"';
const sq = (fill, extra) => `<path d="M2 3h12v10H2z" fill="${fill}" stroke="#6b5f3e" stroke-width="1.2"/>${extra || ''}`;
const portBox = inner => `<path d="M1 1h3v14H1M5 3h9v10H5z" ${dk}/>${inner}`;
const arrowTo = extra => `<path d="M2 14L12 4M7 3h6v6" ${bl}/>${extra || ''}`;
const dashTo = ch => `<path d="M1 14l3-3M6 9l5-5M7 3h6v5" ${bl}/><text x="10" y="16" font-size="8" fill="#222">${ch}</text>`;
const icons = {
    cameoDark: '<path d="M1 2l5 1 2 4 4-5 3 1-5 6 3 5-4 1-2-4-4 4-2-1 5-6z" fill="#444"/>',
    cameo: '<path d="M1 3l4-1 3 5 5-5 2 1-5 6 2 5-3 1-2-4-5 4-1-1 5-6z" fill="#b3b9bd"/><path d="M3 4l6 9M13 3l-9 10" stroke="#555" stroke-width="1"/>',
    min: '<path d="M2 8h12" stroke="#777" stroke-width="1.5"/>',
    restore: '<path d="M2 5h9v9H2zM5 5V2h9v9h-3" fill="none" stroke="#222" stroke-width="1.3"/>',
    close: '<path d="M3 3l10 10M13 3L3 13" stroke="#222" stroke-width="1.5"/>',
    closeBold: '<path d="M4 4l8 8M12 4l-8 8" stroke="#111" stroke-width="2.2"/>',
    float: '<path d="M12 8v5H4V4h4M9 3h4v4" fill="none" stroke="#246" stroke-width="1.5"/>',
    pin: '<path d="M6 2h5v7H6zM4 9h9M8 9v5" fill="none" stroke="#246" stroke-width="1.8"/>',
    caret: '<path d="M4 6h8l-4 5z" fill="#222"/>',
    chev: '<path d="M3 6l5 5 5-5" fill="none" stroke="#555" stroke-width="1.6"/>',
    up: '<path d="M3 11l5-5 5 5" fill="none" stroke="#444" stroke-width="2"/>',
    down: '<path d="M3 5l5 5 5-5" fill="none" stroke="#444" stroke-width="2"/>',
    left: '<path d="M11 3L6 8l5 5" fill="none" stroke="#444" stroke-width="2"/>',
    right: '<path d="M5 3l5 5-5 5" fill="none" stroke="#444" stroke-width="2"/>',
    triL: `<path d="M11 3v10L5 8z" ${dk}/>`,
    triR: `<path d="M5 3v10l6-5z" ${dk}/>`,
    triUp: '<path d="M2 11h12L8 5z" fill="#222"/>',
    list: `<path d="M2 2h12v12H2zM5 5h6M5 8h6M5 11h6" ${dk}/>`,
    newDoc: '<path d="M3 1h7l4 4v10H3z" fill="#fff" stroke="#444" stroke-width="1.3"/><path d="M10 1v4h4" fill="none" stroke="#444"/>',
    open: '<path d="M1 14V4h5l1 2h6v2" fill="#e5c95a" stroke="#5e5120"/><path d="M1 14l3-6h12l-3 6z" fill="#f8e27b" stroke="#5e5120"/><path d="M9 3h5v3" fill="none" stroke="#333"/>',
    save: '<path d="M1 2h13v12H1z" fill="#3f5674" stroke="#222"/><path d="M4 2h8v5H4z" fill="#d7e3f2"/><path d="M4 10h7v4H4z" fill="#aaa"/>',
    print: '<path d="M4 1h6l3 3v9H4z" fill="#fff" stroke="#444"/><path d="M1 11h13v4H1z" fill="#b9b067" stroke="#444"/>',
    preview: `<path d="M4 1h8v9H4zM1 11h13v4H1z" ${dk}/><circle cx="9" cy="8" r="3" fill="#cde" stroke="#333"/>`,
    find: `<path d="M2 14V7l2-4h2l1 4v7zM14 14V7l-2-4h-2L9 7v7zM7 8h2" ${dk}/>`,
    undo: '<path d="M3 4v5h5M3 9q6-7 11-1 1 3-2 6" fill="none" stroke="#3b6186" stroke-width="2"/>',
    redo: '<path d="M13 4v5H8M13 9Q7 2 2 8" fill="none" stroke="#a9b6c6" stroke-width="2"/>',
    clean: `<path d="M2 9q1 4 5 5 3 0 5-3l2-5-3 3 1-6-3 6V3L7 9 5 4v6L2 6z" ${dk}/>`,
    copyDiag: '<path d="M1 2h8v8H1z" fill="#e9f1fb" stroke="#333"/><path d="M6 5h8v9H6z" fill="#5c88bb" stroke="#333"/>',
    create: '<path d="M2 2h10v12H2z" fill="#f3f0dd" stroke="#444" stroke-width="1.3"/><path d="M8 8h6v6H8zM11 1v5" fill="#8aa06f" stroke="#333"/>',
    play: '<path d="M4 2v12l8-6z" fill="none" stroke="#555" stroke-width="1.3"/>',
    tree: `<path d="M2 2h5v4H2zM4 6v8h4M4 9h4M9 7h5v3H9zM9 12h5v3H9z" ${dk}/>`,
    diagrams: `<path d="M2 2h5v6H2zM9 2h5v4H9zM4 8v6M8 10l4-2v6" ${dk}/>`,
    expand: `<path d="M1 5h5v5H1zM8 3h5M8 8h6M10 5l-2 3 2 3M11 1v14" ${dk}/>`,
    collapse: '<path d="M1 5h5v5H1zM8 8h6M11 1v14" fill="none" stroke="#aaa" stroke-width="1.4"/>',
    expand2: `<path d="M1 3h7v6H1zM3 6h3M10 2v10M8 12h5M10 6h4" ${dk}/>`,
    collapse2: `<path d="M1 3h6v6H1zM10 2v12M8 8h6M12 3h3" ${dk}/>`,
    star: '<path d="M8 1l2 5h5l-4 3 2 6-5-4-5 4 2-6-4-3h5z" fill="#fbe36a" stroke="#8a6b14"/>',
    search: '<circle cx="7" cy="7" r="5" fill="none" stroke="#444" stroke-width="1.5"/><path d="M11 11l4 4" stroke="#444" stroke-width="2"/>',
    searchBig: '<circle cx="7" cy="7" r="5.500" fill="none" stroke="#222" stroke-width="2"/><path d="M11 11l4 4" stroke="#222" stroke-width="2.500"/>',
    refresh: '<circle cx="8" cy="8" r="6" fill="#c9c9c9"/><path d="M8 8h7v6H8z" fill="#bbb"/>',
    gear: '<circle cx="8" cy="8" r="4.300" fill="none" stroke="#222" stroke-width="2"/><path d="M8 1v3M8 12v3M1 8h3M12 8h3M3 3l2 2M11 11l2 2M13 3l-2 2M5 11l-2 2" stroke="#222" stroke-width="2"/>',
    zoomTab: `<path d="M2 5V2h3M11 2h3v3M14 11v3h-3M5 14H2v-3M4 4l3 3M12 4L9 7M4 12l3-3M12 12L9 9" ${dk}/>`,
    doc: '<path d="M3 1h7l3 3v11H3z" fill="#f3efd9" stroke="#444" stroke-width="1.3"/><path d="M5 7h6M5 10h6" stroke="#444"/>',
    props: '<path d="M1 2h14v12H1z" fill="#fff" stroke="#444"/><path d="M1 2h14v4H1z" fill="#334a80"/><path d="M6 6v8M1 10h14" stroke="#888"/>',
    categ: `<path d="M1 2h4v4H1zM1 9h4v5H1zM7 2h7v4H7zM7 9h7v5H7zM10 2v12" ${dk}/>`,
    sort: `<path d="M2 7l2-5 2 5M2 9h4l-4 5h4M11 2v11M8 10l3 4 3-4" ${dk}/>`,
    desc: '<path d="M1 6h14v7H1z" fill="#ddd" stroke="#777" stroke-width="1.3"/><path d="M3 10h10" stroke="#555"/>',
    note: '<path d="M1 3h14v8h-5l-3 3v-3H1z" fill="#aaa" stroke="#555"/><path d="M3 5h10M3 8h8" stroke="#444"/>',
    minusBox: '<path d="M3 3h10v10H3zM5 8h6" fill="#fff" stroke="#555" stroke-width="1.3"/>',
    plus: '<path d="M1 1h14v14H1z" fill="#fff" stroke="#777" stroke-width="2"/><path d="M4 8h8M8 4v8" stroke="#333" stroke-width="2"/>',
    minus: '<path d="M1 1h14v14H1z" fill="#fff" stroke="#777" stroke-width="2"/><path d="M4 8h8" stroke="#333" stroke-width="2"/>',
    folder: '<path d="M1 3h6l1 2h7v9H1z" fill="#fff5bd" stroke="#6e6438" stroke-width="1.2"/>',
    pkg: '<path d="M1 3h6l1 2h7v9H1z" fill="#c9cdf0" stroke="#5b5f84" stroke-width="1.2"/>',
    undef: '<path d="M2 2h12v12H2z" fill="#fff" stroke="#333"/><path d="M5 5h6v6H5z"/>',
    block: '<path d="M1 2h14v12H1z" fill="#ddca92" stroke="#6b5f3e"/><path d="M1 9h14v5H1z" fill="#a89663"/>',
    blockL: '<path d="M1 2h14v12H1z" fill="#dccb92" stroke="#6b5f3e"/><path d="M1 10h14v4H1z" fill="#a89663"/><path d="M7 4h5v4H7z" fill="#fff8d8" stroke="#6b5f3e"/>',
    peachI: '<path d="M1 2h14v12H1z" fill="#ffe2bd" stroke="#a98450"/><path d="M1 6h14M1 10h14" stroke="#c59d6a"/>',
    iface: '<circle cx="8" cy="8" r="6" fill="#e8eedf" stroke="#666" stroke-width="1.3"/>',
    bdd: '<path d="M1 1h14v14H1z" fill="#e8dba3" stroke="#6b5f3e"/><path d="M6 3h4v3H6zM3 10h4v3H3zM9 10h4v3H9zM8 6l-3 4M8 6l3 4" fill="none" stroke="#333"/>',
    ibd: '<path d="M1 1h14v14H1z" fill="#efe6b9" stroke="#6b5f3e"/><path d="M3 4h5v7H3zM8 7h4v5" fill="none" stroke="#333"/>',
    act: '<path d="M1 1h14v14H1z" fill="#e8dba3" stroke="#6b5f3e"/><path d="M3 7h4v4H3zM3 4h9v5M9 7h4v4H9z" fill="none" stroke="#333"/>',
    nav: '<path d="M1 1h10l4 4v10H1z" fill="#d9cfc5" stroke="#555"/><path d="M3 7h10M3 10h10M3 13h10" stroke="#744"/>',
    usecase: '<path d="M1 1h14v14H1z" fill="#e8dba3" stroke="#6b5f3e"/><circle cx="5" cy="5" r="2" fill="none" stroke="#333"/><path d="M5 7v5M2 9h6" stroke="#333"/><circle cx="11" cy="11" r="2.500" fill="#fff" stroke="#333"/>',
    back: '<path d="M1 8l6-5v3h8v4H7v3z" fill="#888"/>',
    fwd: '<path d="M15 8L9 3v3H1v4h8v3z" fill="#3a4654"/>',
    goto: `<path d="M3 3l9 1 3 4-4 4-7 1zM3 3v11" ${dk}/>`,
    copy: `<path d="M2 1h6l2 2v9H2zM6 5h6l2 2v8H6z" fill="#fff" stroke="#444" stroke-width="1.3"/>`,
    paste: '<path d="M2 3h12v12H2z" fill="#fff" stroke="#555" stroke-width="1.3"/><path d="M5 1h6v3H5z" fill="#888"/>',
    trash: `<path d="M3 5h10l-1 10H4zM2 4h12M6 2h4M6 7v6M8 7v6M10 7v6" ${dk}/>`,
    dup: '<path d="M1 1h9v9H1z" fill="#ccc" stroke="#444"/><path d="M5 5h10v10H5z" fill="#aaa" stroke="#333"/>',
    layout: `<path d="M6 1h4v4H6zM1 11h4v4H1zM6 11h4v4H6zM11 11h4v4h-4zM8 5v6M8 5l-5 6M8 5l5 6" ${dk}/>`,
    route: '<path d="M8 1l2 5h5l-4 3 2 6-5-4-5 4 2-6-4-3h5z" fill="#777"/>',
    l1: `<path d="M3 13L13 3" ${dk}/>`,
    l2: `<path d="M3 14V4h10" ${dk}/>`,
    l3: `<path d="M3 3h10L3 13" ${dk}/>`,
    l4: `<path d="M3 14q0-10 10-10" ${dk}/>`,
    l5: `<path d="M2 13L13 3M3 3h3M10 13h3" ${dk}/>`,
    l6: `<path d="M3 5h7v7H3zM13 3v8" ${dk}/>`,
    fill: '<path d="M3 9l5-7 5 7z" fill="#8fa3b8" stroke="#333"/><path d="M2 11h12v4H2z" fill="#f2c44a"/>',
    addDiag: `<path d="M2 4h8v11H2zM10 8h4v6h-4M12 1v6M9 4h6" ${dk}/>`,
    refreshD: '<path d="M3 3h8l3 5-3 6H5L2 9z" fill="#b5b5b5" stroke="#333"/><path d="M5 6l8 4" stroke="#222" stroke-width="2"/>',
    port: `<path d="M1 5h8v6H1zM9 8h4M13 3v3M13 10v4" ${dk}/>`,
    comp: `<path d="M2 3h12v10H2zM2 6h12M6 9h5" ${dk}/>`,
    image: '<path d="M1 3h14v11H1z" fill="#4c86b8" stroke="#222"/><path d="M2 11l4-4 4 4 2-2 3 3" fill="none" stroke="#fff"/>',
    dim: '<path d="M1 5h14v8H1z" fill="#777"/>',
    align: `<path d="M1 1v14h13V1zM4 4h6v3H4zM6 9h6v3H6z" ${dk}/>`,
    listC: '<path d="M1 2h14v12H1z" fill="#fff" stroke="#333" stroke-width="1.3"/><path d="M3 5h2M3 8h2M3 11h2" stroke="#c33" stroke-width="2"/><path d="M7 5h6M7 8h6M7 11h6" stroke="#555"/>',
    cursor: '<path d="M5 2v11l3-3 2 5 2-1-2-4h4z" fill="#fff" stroke="#222" stroke-width="1.2"/>',
    lasso: `<circle cx="7" cy="7" r="4.500" stroke-dasharray="2 1" ${dk}/><path d="M10 10l4 4" ${dk}/>`,
    marquee: '<path d="M1 3h14M1 8h14M1 13h14M3 1v14M8 1v14M13 1v14" stroke="#445" stroke-dasharray="2 1"/><path d="M4 4h8v8H4z" fill="#8a97ad"/>',
    stamp: `<path d="M6 8V5q-1-3 2-3t2 3v3l3 4H3zM1 14h14" ${dk}/>`,
    spread: '<path d="M1 7h14v2H1zM8 0l4 4H4zM8 16l4-4H4zM7 3h2v10H7z" fill="#444"/>',
    gather: '<path d="M1 1h14v2H1zM1 13h14v2H1zM8 4l3 3H5zM8 12l3-3H5zM7 5h2v6H7z" fill="#444"/>',
    textT: '<path d="M5 3h10v2h-4v9H9V5H5z" fill="#d22"/><path d="M1 4h2v2H1zM1 9h2v2H1z" fill="#333"/>',
    valu: sq('#fbd3d3', '<path d="M6 6l2 4 2-4" fill="none" stroke="#a33"/>'),
    enumI: sq('#fbd3d3', '<path d="M10 6H7v4h3M7 8h3" fill="none" stroke="#a33"/>'),
    signal: sq('#f8dca5', '<path d="M6 6h4v4H6z" fill="#c60"/>'),
    inst: sq('#fffbe0', '<path d="M5 8h6" stroke="#333" stroke-width="2"/>'),
    prox: portBox('<path d="M8 11V6h3v2H8" fill="none" stroke="#572"/>'),
    link: `<path d="M2 14L13 2" ${bl}/><path d="M13 12v3" stroke="#222"/>`,
    inter: `<path d="M1 15l6-6M8 9l5-6M8 4h5v5" ${bl}/><circle cx="8" cy="8" r="2.500" fill="#fff" stroke="#333"/>`,
    asso: '<path d="M2 2h12v6H2z" fill="#efe6c0" stroke="#6b5f3e"/><path d="M1 8h14v6H1z" fill="#a89663" stroke="#6b5f3e"/>',
    direc: arrowTo(),
    direc2: arrowTo('<circle cx="4" cy="12" r="2.500" fill="#fff" stroke="#2a4db0"/>'),
    direc3: arrowTo('<path d="M1 10h5v5H1z" fill="#2a4db0"/>'),
    gen: arrowTo('<path d="M2 10v4h4" fill="none" stroke="#333"/>'),
    usage: dashTo('.'),
    req: sq('#fbd3d3', '<path d="M6 11V6h4v2H6l4 3" fill="none" stroke="#a33"/>'),
    sat: dashTo('s'), der: dashTo('D'), cpy: dashTo('cp'), trc: dashTo('t'), ver: dashTo('v'), ref: dashTo('r'),
    testc: '<path d="M2 3q5-3 6 2v4H4z" fill="#eeeec0" stroke="#554"/><rect x="7" y="7" width="8" height="7" rx="2" fill="#e9ecc9" stroke="#554"/>',
    dot: '<circle cx="8" cy="8" r="5" fill="#333"/>',
    actn: '<rect x="1" y="2" width="14" height="12" rx="3" fill="#e9ecc9" stroke="#777"/><path d="M4 6l3 2-3 2M9 6h3v4H9" fill="none" stroke="#333"/>',
    attr: '<circle cx="9" cy="8" r="4.500" fill="#ffe9c9" stroke="#8b6e42" stroke-width="1.3"/>',
    oper: '<circle cx="8" cy="8" r="4.500" fill="#f0f3d2" stroke="#6c7350" stroke-width="1.3"/>',
    parm: '<circle cx="9" cy="8" r="4.500" fill="#dfe3f3" stroke="#5b6382" stroke-width="1.3"/>',
    portI: '<path d="M1 1h3v14H1" fill="none" stroke="#555"/><path d="M4 3h11v11H4z" fill="#e9edd0" stroke="#666" stroke-width="1.3"/>',
    rel: `<path d="M1 14L10 3M6 15l9-11M7 3h4v4" ${bl}/>`,
    portP: portBox('<path d="M8 11V6h3v2H8" fill="none" stroke="#333"/>'),
    portF: portBox('<path d="M6 4h7v8H6z" fill="#c8bd86"/><path d="M8 11V6h3M8 8h3" fill="none" stroke="#333"/>'),
    portX: portBox('<path d="M7 8l2-2M7 8l2 2M12 6l-1 4" fill="none" stroke="#484"/>'),
    assocB: arrowTo('<path d="M1 10h6v5H1z" fill="#2a4db0"/>'),
    cross: `<path d="M3 14L13 3M3 8h10M7 3v9" ${dk}/>`,
    dirA: arrowTo('<path d="M10 15l2-4 2 4z" fill="#333"/>'),
    anchor: `<path d="M7 2h7v7H7zM9 5h3M1 14l6-6" ${dk}/>`,
    imgBox: '<path d="M1 3h14v11H1z" fill="#fff" stroke="#333" stroke-width="1.500"/><path d="M4 12l3-4 2 2 2-3 3 5z" fill="#333"/>',
    rcBox: '<path d="M1 2h14v12H1z" fill="#e5dcc0" stroke="#333" stroke-width="1.4"/><path d="M4 11V5h3v3H4l3 3M12 5H9v6h3" fill="none" stroke="#333"/>',
    hier: `<path d="M6 1h5v4H6zM6 6h5v4H6zM6 11h5v4H6zM2 7h4M11 8h4v-3" ${dk}/>`,
    zoomOut: '<circle cx="7" cy="7" r="5" fill="#eef4fb" stroke="#444" stroke-width="1.5"/><path d="M5 7h4M11 11l4 4" stroke="#444" stroke-width="1.8"/>',
    zoomIn: '<circle cx="7" cy="7" r="5" fill="#eef4fb" stroke="#444" stroke-width="1.5"/><path d="M5 7h4M7 5v4M11 11l4 4" stroke="#444" stroke-width="1.8"/>',
    busy: '<path d="M8 1v4M8 11v4M1 8h4M11 8h4M3 3l3 3M10 10l3 3M13 3l-3 3M6 10l-3 3" stroke="#8fa3bd" stroke-width="1.5"/>',
    // taskbar
    win: '<path d="M2 4l5-1v4.500H2zM8 3l6-1v5.500H8zM2 8.500h5V13l-5-1zM8 8.500h6V14l-6-1z" fill="#fff"/>',
    tsearch: `<circle cx="9" cy="6" r="4.500" ${wh}/><path d="M6 9l-4 6" ${wh}/>`,
    tview: `<path d="M3 5h6v6H3zM3 1v2h6V1M3 15v-2h6v2M12 2v12" ${wh}/><path d="M11 6h3v3h-3z" fill="#fff"/>`,
    explorer: '<path d="M0 2h6l1 2h9v11H0z" fill="#e9b53c"/><path d="M0 6h16v9H0z" fill="#ffdb70"/><path d="M3 10h10v5h-3v-2H6v2H3z" fill="#3b86cc"/>',
    edge: '<circle cx="8" cy="8" r="8" fill="#1b7fd0"/><path d="M0 8a8 8 0 0 1 16-1q0 4-5 4-2-1-1-3-1-4-5-3-4 0-5 3z" fill="#43c6a0"/><path d="M5 9q0 5 7 5-5 4-9-1-2-5 3-7z" fill="#0c4f9e"/>',
    sgreen: '<path d="M0 0h16v16H0z" fill="#15191b"/><path d="M11 3Q6 1 6 5t4 5-3 4" fill="none" stroke="#64c46b" stroke-width="2"/>',
    outlook: '<path d="M6 3h10v10H6z" fill="#5bb4ef"/><path d="M0 2h9v12H0z" fill="#0a64b5"/><circle cx="4.500" cy="8" r="2.300" fill="none" stroke="#fff" stroke-width="1.4"/><path d="M11 8l5 8H7z" fill="#f2b45a" stroke="#b5651d" stroke-width=".5"/><path d="M11.500 11v3" stroke="#222"/>',
    word: '<path d="M7 2h9v12H7z" fill="#fff"/><path d="M10 5h5M10 8h5M10 11h5" stroke="#2b579a"/><path d="M0 2l9-1v14l-9-1z" fill="#2b579a"/><path d="M2 5l1 6 1.500-4L6 11l1-6" fill="none" stroke="#fff"/>',
    npp: '<path d="M1 1h12v14H1z" fill="#f0f5df"/><path d="M1 7h12v8H1z" fill="#8cc63f"/><path d="M7 10l7-8 2 1-7 8z" fill="#e9b53c"/><path d="M3 4h6" stroke="#999"/>',
    notepad: '<path d="M5 1l9 1-4 13H1z" fill="#a6d4df"/><path d="M5 1l9 1-1 2-9-1z" fill="#e8f6f8"/><path d="M14 3l1 8-5 4z" fill="#6e9aa6"/>',
    magic: '<path d="M1 0h14v16H1z" fill="#8fbf2c"/><path d="M3 2h10v12H3zM4 4l8 8M12 4l-8 8M5 12l3-8" fill="none" stroke="#22360c" stroke-width="1.3"/>',
    snip: '<circle cx="7" cy="6" r="6" fill="#e9d6d6"/><path d="M2 9l8-5" stroke="#b44" stroke-width="2"/><circle cx="9" cy="12" r="2.200" fill="none" stroke="#c33" stroke-width="1.3"/><circle cx="14" cy="10" r="1.800" fill="none" stroke="#3a6ea8" stroke-width="1.3"/>',
    skype: '<circle cx="8" cy="8" r="7.500" fill="#0ea3e6"/><path d="M11 5Q8 3 6 5t2 3 2 3-5 0" fill="none" stroke="#fff" stroke-width="1.8"/>',
    skypeB: '<circle cx="8" cy="7" r="7" fill="#e9f6fd" stroke="#0ea3e6" stroke-width="1.5"/><path d="M11 4Q8 2 6 4t2 3 2 3-5 0" fill="none" stroke="#0a7fc4" stroke-width="1.8"/><circle cx="12.500" cy="12.500" r="3.500" fill="#6bb700"/><path d="M11 12l1.500 1.500 2-3" fill="none" stroke="#fff"/>',
    bluebox: '<path d="M3 1h10v6H3zM3 10h10v5H3z" fill="#0808e0" stroke="#fff" stroke-width="1.2"/><path d="M1 5v8M15 5v8M1 8.500h14" stroke="#cfd6e6" stroke-width="1.2"/>',
    firefox: '<circle cx="8" cy="8.500" r="7" fill="#ff7a1a"/><path d="M1 6l3-4q2 3 5 1 7 3 6 9-2-5-6-5z" fill="#ffc72e"/><circle cx="8" cy="9" r="3.500" fill="#7540c9"/>',
    chrome: '<circle cx="8" cy="8" r="7.500" fill="#e8453c"/><path d="M1.500 4.300A7.500 7.500 0 0 0 8 15.500L11 10H5z" fill="#34a853"/><path d="M8 15.500A7.500 7.500 0 0 0 15 5H8l3.500 5z" fill="#fbc116"/><circle cx="8" cy="8" r="3.400" fill="#4285f4" stroke="#fff"/>',
    ppt: '<path d="M7 2h9v12H7z" fill="#fff"/><circle cx="12" cy="7" r="2.500" fill="#d24726"/><path d="M10 11h5" stroke="#d24726"/><path d="M0 2l9-1v14l-9-1z" fill="#d24726"/><path d="M3.500 12V5h2q2 2 0 4h-2" fill="none" stroke="#fff" stroke-width="1.3"/>',
    camtasia: '<rect x="0" y="0" width="16" height="16" rx="2" fill="#e8483a"/><path d="M12 4H4v8h8" fill="none" stroke="#fff" stroke-width="2.600"/>',
    trayUp: `<path d="M3 11l5-5 5 5" ${wh}/>`,
    mic: '<rect x="5" y="0" width="6" height="10" rx="3" fill="#fff"/><path d="M3 7q0 5 5 5t5-5M8 12v4M5 15h6" fill="none" stroke="#fff" stroke-width="1.4"/>',
    wifi: `<path d="M2 14q1-11 12-12M6 14q1-7 8-8M10 14q0-3 4-4M2 14h12" ${wh}/>`,
    sound: `<path d="M1 6h3l4-4v12l-4-4H1zM10 5q2 3 0 6M12 3q4 5 0 10" ${wh}/>`,
    notif: '<path d="M1 1h14v11H8l-3 3v-3H1z" fill="#fff"/><path d="M3 4h10M3 6.500h10M3 9h7" stroke="#1b2740"/>'
};

function svg(name) {
    return '<svg viewBox="0 0 16 16" aria-hidden="true">' + icons[name] + '</svg>';
}
function icon(name) {
    return '<i>' + svg(name) + '</i>';
}

// toolbars: "|" grip, "v" caret, "_" gap, "=" rule, "-x" disabled, "*x" pressed
document.querySelectorAll('[data-tools]').forEach(bar => {
    bar.innerHTML = bar.dataset.tools.split(' ').map(t => {
        if (t === '|') return '<span class="grip"></span>';
        if (t === 'v') return '<span class="caret">' + svg('caret') + '</span>';
        if (t === '_') return '<span class="gap"></span>';
        if (t === '=') return '<hr>';
        const cls = t[0] === '-' ? ' off' : t[0] === '*' ? ' hot' : '';
        const name = t.replace(/^[-*]/, '');
        return `<button class="tool${cls}" aria-label="${name}">${icon(name)}</button>`;
    }).join('');
});

// containment tree: depth, expander, icon, label
const tree = [
    [5, '+', 'iface', '<b>EnrolledUserInfo</b>'],
    [5, '', 'dot', '&lt; &gt;'],
    [5, '+', 'actn', "a=1; b='Yes'; c=t"],
    [4, '', 'attr', '-Input Enrolled Faces'],
    [4, '', 'portI', '+Recognize Face in v'],
    [4, '', 'portI', '+p2 <em>«ProxyPort»</em>'],
    [4, '', 'portI', '+Camera view <em>«Prox</em>'],
    [4, '', 'portI', '+p3 : Face Perception'],
    [4, '', 'oper', "+Recognize Driver's f"],
    [4, '', 'oper', '+Enroll user()'],
    [4, '', 'oper', '+Remove User()'],
    [4, '', 'oper', '+Remove all users()'],
    [3, '+', 'block', 'Face Recognition System'],
    [3, '+', 'block', '<b>IF</b> <em>«Block»</em>'],
    [3, '', 'peachI', 'logical1'],
    [3, '', 'peachI', 'Personal Portable Profile'],
    [3, '+', 'peachI', 'PPP'],
    [3, '-', 'block', '<b>Provider</b> <em>«Block»</em>'],
    [4, '+', 'rel', 'Relations'],
    [4, '-', 'testc', '<b>EnrolledUserInfo( a :</b>'],
    [5, '+', 'rel', 'Relations'],
    [5, '', 'act', '<span class="sel">EnrolledUserInfo</span>'],
    [5, '', 'parm', 'in <b>a</b> : Integer'],
    [5, '', 'parm', 'in <b>b</b> : String'],
    [5, '', 'parm', 'in <b>c</b> : Boolean']
];
document.getElementById('tree').innerHTML = tree.map(([depth, pm, ic, label]) =>
    '<li>' + '<span class="lvl"></span>'.repeat(depth) +
    (pm ? `<i class="pm">${svg(pm === '+' ? 'plus' : 'minus')}</i>` : '<i class="pm leaf"></i>') +
    icon(ic) + `<span>${label}</span></li>`).join('');

// palette entries, a trailing "v" marks a split button
const palBlock = ['pkg Package', 'block Block', 'blockL Interfa...', 'blockL Flow Sp...', 'blockL Constra...',
    'blockL Domain v', 'valu Valu... v', 'enumI Enumer...', 'signal Signal', 'inst Instance', 'iface Interface',
    'prox Prox... v', 'inter Inter... v', 'link Link', 'asso Asso... v', 'direc Direc... v', 'direc2 Direc... v',
    'direc3 Direc... v', 'gen Gen... v', 'usage Usage v', 'usage Item Flow'];
const palReq = ['req Requirement', 'enumI Extend... v', 'sat Satisfy', 'der Derive', 'cpy Copy', 'trc Trace',
    'ver Verify', 'ref Refine', 'testc Test Ca... v'];
function fillPalette(id, items) {
    document.getElementById(id).innerHTML = items.map(item => {
        const split = item.endsWith(' v');
        const name = item.split(' ')[0];
        const label = item.slice(name.length + 1).replace(/ v$/, '');
        return `<li><button>${icon(name)}${label}${split ? icon('caret') : ''}</button></li>`;
    }).join('');
}
fillPalette('palBlock', palBlock);
fillPalette('palReq', palReq);

// taskbar: "*" running, "!" in front
const apps = ['win', 'tsearch', 'tview', '*explorer', 'edge', '*sgreen', '*outlook', 'word', 'npp', 'notepad', 'cameo',
    'magic', 'cameo', '*snip', 'skype', '*skypeB', 'bluebox', 'bluebox', 'cameo', 'firefox', 'chrome', 'cameo',
    'cameo', '*ppt', '!cameo', '*camtasia'];
document.getElementById('apps').innerHTML = apps.map(a => {
    const name = a.replace(/^[*!]/, '');
    const cls = a[0] === '*' ? 'run' : a[0] === '!' ? 'run front' : '';
    return `<button class="${cls}" aria-label="${name}">${icon(name)}</button>`;
}).join('');

document.querySelectorAll('i[data-icon]').forEach(el => {
    el.innerHTML = svg(el.dataset.icon);
});
```
